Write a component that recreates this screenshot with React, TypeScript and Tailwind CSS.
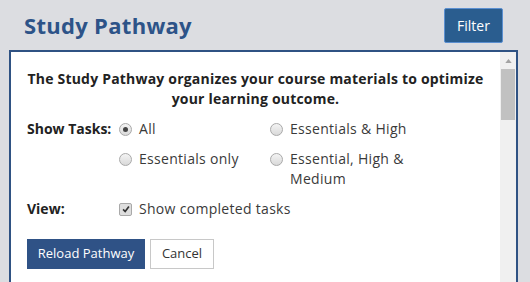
import React from 'react'

const font = { fontFamily: '"Open Sans", "Noto Sans", sans-serif' }

const Radio = ({ checked = false }: { checked?: boolean }) => (
  <span className="flex h-[13px] w-[13px] shrink-0 items-center justify-center rounded-full border border-[#a9a9a9] bg-gradient-to-b from-[#f4f4f4] to-[#d9d9d9]">
    {checked && <span className="h-[5px] w-[5px] rounded-full bg-[#444]" />}
  </span>
)

const Option = ({ label, checked }: { label: React.ReactNode; checked?: boolean }) => (
  <div className="flex items-start gap-[7px]">
    <span className="flex h-[20px] items-center">
      <Radio checked={checked} />
    </span>
    <span className="leading-[20px] tracking-[0.3px]">{label}</span>
  </div>
)

export default function App() {
  return (
    <div className="h-[282px] w-[530px] overflow-hidden bg-[#dcdde1] text-[#3a3a3a]" style={font}>
      {/* header */}
      <div className="flex h-[50px] items-center justify-between pl-[24px] pr-[27px]">
        <h1 className="text-[22px] font-bold tracking-[0.3px] text-[#2d5388]">Study Pathway</h1>
        <button className="h-[35px] w-[59px] rounded-[2px] border border-[#5b8fd0] bg-[#2a5d8f] text-[14px] text-white">
          Filter
        </button>
      </div>

      {/* panel */}
      <div className="ml-[9px] flex h-[240px] w-[509px] border-2 border-b-0 border-[#2f5283] bg-white">
        <div className="flex-1 px-[16px] pt-[17px] text-[14px]">
          <p className="text-center font-bold leading-[20px] tracking-[0.2px] text-[#222]">
            The Study Pathway organizes your course materials to optimize your learning outcome.
          </p>

          <div className="mt-[10px] grid grid-cols-[92px_151px_1fr] gap-y-[10px]">
            <div className="font-bold leading-[20px] text-[#222]">Show Tasks:</div>
            <Option label="All" checked />
            <Option label="Essentials & High" />
            <div />
            <Option label="Essentials only" />
            <Option
              label={
                <>
                  Essential, High &amp;
                  <br />
                  Medium
                </>
              }
            />
            <div className="font-bold leading-[20px] text-[#222]">View:</div>
            <div className="col-span-2 flex items-center gap-[7px]">
              <span className="flex h-[13px] w-[13px] items-center justify-center rounded-[2px] border border-[#a9a9a9] bg-[#dedede]">
                <svg viewBox="0 0 12 12" className="h-[10px] w-[10px]">
                  <path d="M2.5 6.5 L5 9 L9.5 3" fill="none" stroke="#333" strokeWidth="2" />
                </svg>
              </span>
              <span className="leading-[20px] tracking-[0.3px]">Show completed tasks</span>
            </div>
          </div>

          <div className="mt-[20px] flex gap-[5px]">
            <button className="h-[30px] w-[118px] bg-[#2f5286] text-[13px] text-white">Reload Pathway</button>
            <button className="h-[30px] w-[64px] border border-[#c8c8c8] bg-white text-[13px] text-[#333]">
              Cancel
            </button>
          </div>
        </div>

        {/* scrollbar */}
        <div className="flex w-[16px] flex-col bg-[#f0f0f0]">
          <div className="flex h-[17px] items-center justify-center">
            <svg viewBox="0 0 8 5" className="h-[4px] w-[7px]">
              <path d="M0 5 L4 0 L8 5 Z" fill="#a3a3a3" />
            </svg>
          </div>
          <div className="mx-[1px] h-[51px] bg-[#c1c1c1]" />
        </div>
      </div>
    </div>
  )
}
